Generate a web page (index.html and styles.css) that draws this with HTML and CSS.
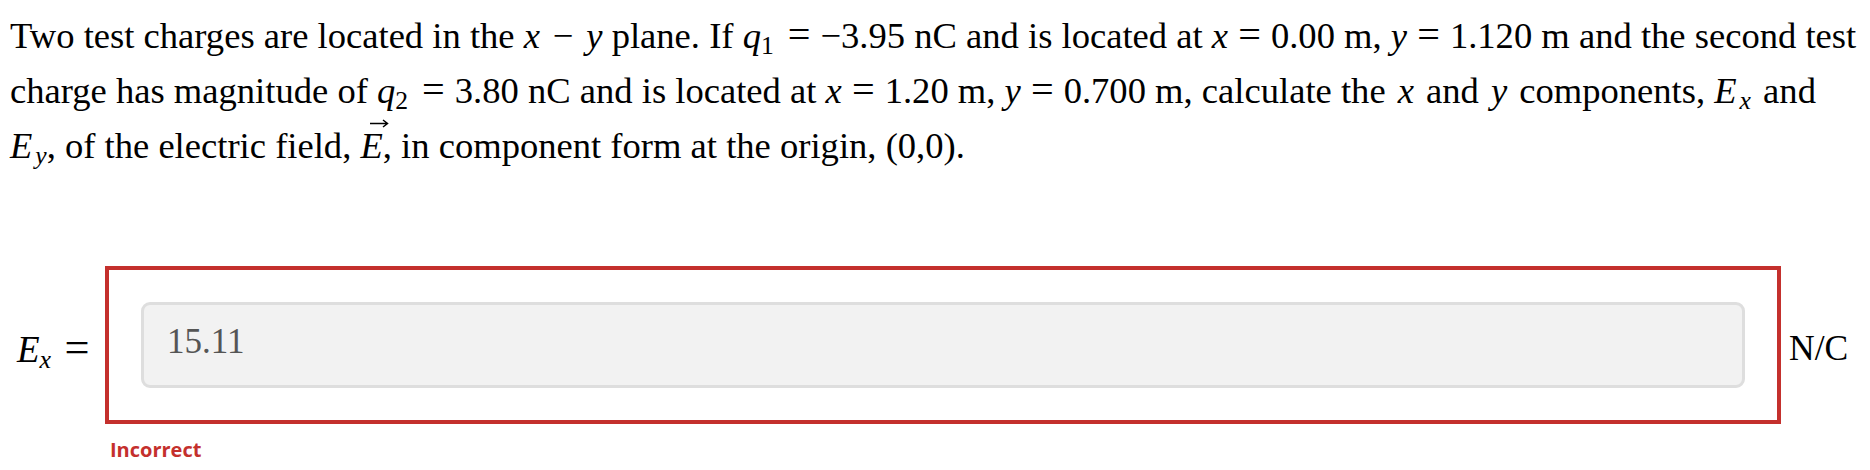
FILE: index.html
```html
<!DOCTYPE html>
<html>
<head>
<meta charset="utf-8">
<link rel="stylesheet" href="styles.css">
</head>
<body>
<div class="page">
  <p class="question">Two test charges are located in the <span class="mi">x</span><span class="mo">−</span><span class="mi">y</span> plane. If <span class="mi">q</span><span class="sub qsub">1</span><span class="eq">=</span>−3.95 nC and is located at <span class="mi">x</span><span class="eq">=</span>0.00 m, <span class="mi">y</span><span class="eq">=</span>1.120 m and the second test charge has magnitude of <span class="mi">q</span><span class="sub qsub">2</span><span class="eq">=</span>3.80 nC and is located at <span class="mi">x</span><span class="eq">=</span>1.20 m, <span class="mi">y</span><span class="eq">=</span>0.700 m, calculate the <span class="mi var">x</span> and <span class="mi var">y</span> components, <span class="mi base">E</span><span class="sub mi esub">x</span> and<br><span class="mi base">E</span><span class="sub mi">y</span>, of the electric field, <span class="vec"><span class="mi">E</span><svg class="arrow" viewBox="0 0 20 9" width="20" height="9"><path d="M1 4.5 H18 M14 1 L18.5 4.5 L14 8" fill="none" stroke="#000" stroke-width="1.5"/></svg></span>, in component form at the origin, (0,0).</p>

  <div class="answer-row">
    <div class="label"><span class="mi">E</span><span class="sub mi">x</span><span class="eq">=</span></div>
    <div class="answer-box">
      <div class="input">15.11</div>
    </div>
    <div class="unit">N/C</div>
  </div>
  <div class="feedback">Incorrect</div>
</div>
</body>
</html>
```

FILE: styles.css
```css
html, body {
  margin: 0;
  padding: 0;
  background: #ffffff;
}

.page {
  padding: 8px 6px 0 10px;
  font-family: "Liberation Serif", "Times New Roman", serif;
  color: #000;
}

.question {
  margin: 0;
  font-size: 36.6px;
  line-height: 55px;
}

.mi {
  font-style: italic;
}

.var {
  margin: 0 0.08em;
}

.base {
  padding-right: 0.08em;
}

.esub {
  margin-right: 0.12em;
}

.mo {
  margin: 0 0.35em;
}

.eq {
  font-size: 1.1em;
  margin: 0 0.25em;
  line-height: 0;
}

.sub {
  font-size: 70%;
  vertical-align: -0.25em;
  line-height: 0;
}

.qsub {
  margin-right: 0.15em;
}

.vec {
  position: relative;
  display: inline-block;
}

.arrow {
  position: absolute;
  left: 9px;
  top: 1px;
}

.answer-row {
  display: flex;
  align-items: center;
  margin-top: 93px;
}

.label {
  width: 95px;
  padding-left: 7px;
  box-sizing: border-box;
  font-size: 37px;
  padding-top: 8px;
  white-space: nowrap;
}

.label .eq {
  font-size: 1.2em;
  margin-left: 0.3em;
}

.answer-box {
  flex: 1;
  border: 4px solid #c4302d;
  padding: 32px;
}

.input {
  height: 86px;
  box-sizing: border-box;
  border: 3px solid #dedede;
  border-radius: 9px;
  background: #f2f2f2;
  padding-left: 23px;
  display: flex;
  align-items: center;
  padding-bottom: 6px;
  font-size: 35px;
  color: #555;
}

.unit {
  width: 83px;
  padding-left: 8px;
  box-sizing: border-box;
  font-size: 35.5px;
  padding-top: 6px;
}

.feedback {
  margin-top: 12px;
  padding-left: 100px;
  font-family: "Open Sans", "Liberation Sans", sans-serif;
  font-weight: 700;
  font-size: 20px;
  color: #c4302d;
}
```
